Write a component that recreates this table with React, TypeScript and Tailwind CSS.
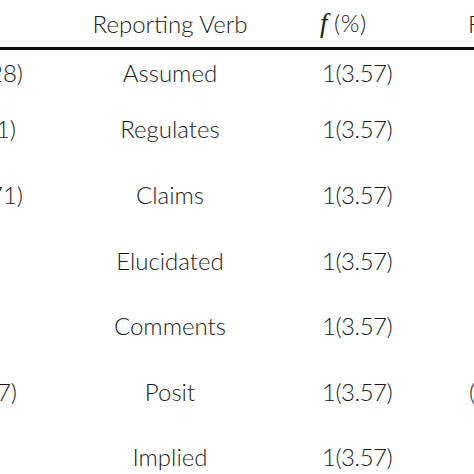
const rows = [
  { left: "8(14.28)", pr: "pr-[7px]", verb: "Assumed", freq: "1(3.57)", right: "", h: "h-[46px]" },
  { left: "2(7.1)", pr: "pr-[14px]", verb: "Regulates", freq: "1(3.57)", right: "", h: "h-[66px]" },
  { left: "3(10.71)", pr: "pr-[7px]", verb: "Claims", freq: "1(3.57)", right: "", h: "h-[66px]" },
  { left: "", pr: "pr-[7px]", verb: "Elucidated", freq: "1(3.57)", right: "", h: "h-[65px]" },
  { left: "", pr: "pr-[7px]", verb: "Comments", freq: "1(3.57)", right: "", h: "h-[66px]" },
  { left: "2(7.1.7)", pr: "pr-[13px]", verb: "Posit", freq: "1(3.57)", right: "(", h: "h-[65px]" },
  { left: "", pr: "pr-[7px]", verb: "Implied", freq: "1(3.57)", right: "", h: "h-[66px]" },
];

const cols = "grid grid-cols-[30px_280px_90px_74px]";

export default function App() {
  return (
    <div className="w-[474px] h-[474px] overflow-hidden bg-white text-[24px] font-light text-[#1a1a1a] font-['Lato',sans-serif]">
      <div className={`${cols} h-[47px] items-center`}>
        <div />
        <div className="text-center whitespace-nowrap">Reporting Verb</div>
        <div className="pl-[10px] whitespace-nowrap tracking-[0.5px]">
          <span className="font-['Liberation_Serif',serif] italic text-[27px] mr-[6px]">f</span>(%)
        </div>
        <div className="pl-[68px] whitespace-nowrap overflow-hidden">F</div>
      </div>
      <div className="h-[3px] bg-[#111]" />
      {rows.map((r) => (
        <div key={r.verb} className={`${cols} ${r.h} items-center`}>
          <div className={`flex justify-end overflow-hidden whitespace-nowrap ${r.pr}`}>
            <span>{r.left}</span>
          </div>
          <div className="text-center whitespace-nowrap">{r.verb}</div>
          <div className="pl-[12px] whitespace-nowrap tracking-[-0.5px]">{r.freq}</div>
          <div className="pl-[69px] whitespace-nowrap overflow-hidden">{r.right}</div>
        </div>
      ))}
    </div>
  );
}
